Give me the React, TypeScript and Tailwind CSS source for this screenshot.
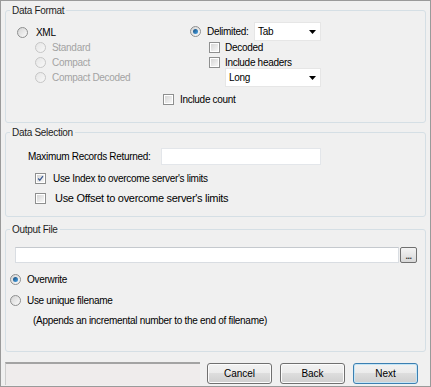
import React from 'react';

const Radio = ({ checked = false, disabled = false }: { checked?: boolean; disabled?: boolean }) => (
  <span
    className={`w-[11px] h-[11px] rounded-full border shrink-0 flex items-center justify-center ${
      disabled
        ? 'border-[#c6c6c6] bg-linear-to-br from-[#e6e6e6] to-[#f8f8f8]'
        : 'border-[#8e8f8f] bg-linear-to-br from-[#d4d4d4] to-[#fbfbfb]'
    }`}
  >
    {checked && <span className="w-[5px] h-[5px] rounded-full bg-linear-to-br from-[#164b7a] to-[#4aa6ea]" />}
  </span>
);

const Check = ({ checked = false }: { checked?: boolean }) => (
  <span className="w-[11px] h-[11px] border border-[#8e8f8f] bg-white p-[1px] shrink-0">
    <span className="relative block w-full h-full bg-linear-to-br from-[#d6d6d6] to-[#f7f7f7]">
      {checked && (
        <svg viewBox="0 0 9 9" className="absolute inset-0 w-full h-full">
          <path d="M1.5 4.5 L3.6 6.8 L7.6 1.4" fill="none" stroke="#3a5a93" strokeWidth="1.6" />
        </svg>
      )}
    </span>
  </span>
);

const Combo = ({ value, width }: { value: string; width: string }) => (
  <div className={`${width} h-[19px] bg-white border border-[#e6e6e6] flex items-center justify-between pl-[3px] pr-[4px]`}>
    <span>{value}</span>
    <svg width="7" height="4" viewBox="0 0 7 4">
      <path d="M0 0H7L3.5 4Z" fill="#000" />
    </svg>
  </div>
);

const Btn = ({ label, primary = false }: { label: string; primary?: boolean }) => (
  <button
    className={`w-[65px] h-[21px] rounded-[3px] border text-[10px] text-black bg-[linear-gradient(#f2f2f2_0%,#ebebeb_50%,#dddddd_50%,#cfcfcf_100%)] ${
      primary
        ? 'border-[#3c7fb1] shadow-[inset_0_0_0_1px_#c4e5f6]'
        : 'border-[#707070] shadow-[inset_0_0_0_1px_#fcfcfc]'
    }`}
  >
    {label}
  </button>
);

export default function App() {
  return (
    <div className="w-[431px] h-[387px] overflow-hidden bg-[#f0f0f0] border border-[#9a9a9a] px-[4px] flex flex-col font-['Liberation_Sans',Arial,sans-serif] text-[10px] tracking-[-0.3px] text-black">
      {/* Data Format */}
      <fieldset className="mt-[3px] h-[119px] border border-[#d5dfe5] rounded-[3px]">
        <legend className="ml-[4px] px-[2px] leading-[13px] text-[#1e1e1e]">Data Format</legend>
        <div className="flex">
          <div className="w-[184px] pl-[11px] pt-[8px] flex flex-col">
            <div className="h-[15px] flex items-center gap-[8px]">
              <Radio />
              <span>XML</span>
            </div>
            {['Standard', 'Compact', 'Compact Decoded'].map((t) => (
              <div key={t} className="h-[15px] ml-[18px] flex items-center gap-[6px] text-[#a3a3a3]">
                <Radio disabled />
                <span>{t}</span>
              </div>
            ))}
          </div>
          <div className="pt-[5px] flex flex-col">
            <div className="h-[19px] flex items-center">
              <Radio checked />
              <span className="ml-[6px] w-[47px]">Delimited:</span>
              <Combo value="Tab" width="w-[67px]" />
            </div>
            <div className="h-[14px] mt-[-1px] ml-[19px] flex items-center gap-[5px]">
              <Check />
              <span>Decoded</span>
            </div>
            <div className="h-[14px] mt-[1px] ml-[19px] flex items-center gap-[5px]">
              <Check />
              <span>Include headers</span>
            </div>
            <div className="mt-[-1px] ml-[35px]">
              <Combo value="Long" width="w-[96px]" />
            </div>
          </div>
        </div>
        <div className="h-[14px] mt-[5px] ml-[157px] flex items-center gap-[6px]">
          <Check />
          <span>Include count</span>
        </div>
      </fieldset>

      {/* Data Selection */}
      <fieldset className="mt-[3px] h-[91px] border border-[#d5dfe5] rounded-[3px]">
        <legend className="ml-[4px] px-[2px] leading-[13px] text-[#1e1e1e]">Data Selection</legend>
        <div className="mt-[9px] h-[17px] flex items-center">
          <span className="ml-[22px] w-[133px]">Maximum Records Returned:</span>
          <div className="w-[160px] h-[17px] bg-white border border-[#e3e6ea]" />
        </div>
        <div className="mt-[6px] h-[14px] ml-[29px] flex items-center gap-[7px]">
          <Check checked />
          <span>Use Index to overcome server's limits</span>
        </div>
        <div className="mt-[6px] h-[14px] ml-[29px] flex items-center gap-[9px] text-[11px]">
          <Check />
          <span>Use Offset to overcome server's limits</span>
        </div>
      </fieldset>

      {/* Output File */}
      <fieldset className="mt-[6px] h-[129px] border border-[#d5dfe5] rounded-[3px]">
        <legend className="ml-[4px] px-[2px] leading-[13px] text-[#1e1e1e]">Output File</legend>
        <div className="mt-[11px] ml-[9px] h-[16px] flex gap-[1px]">
          <div className="w-[384px] h-[16px] bg-white border border-[#d9dde2] border-t-[#c5c9ce]" />
          <div className="w-[17px] h-[16px] rounded-[2px] border border-[#707070] bg-[linear-gradient(#f4f4f4,#d8d8d8)] flex items-end justify-center pb-[3px]">
            <span className="text-[9px] font-bold leading-[5px] tracking-[-0.5px] text-[#333]">...</span>
          </div>
        </div>
        <div className="mt-[9px] ml-[4px] h-[14px] flex items-center gap-[6px]">
          <Radio checked />
          <span>Overwrite</span>
        </div>
        <div className="mt-[7px] ml-[4px] h-[14px] flex items-center gap-[6px]">
          <Radio />
          <span>Use unique filename</span>
        </div>
        <div className="mt-[6px] ml-[27px] h-[14px] flex items-center">
          (Appends an incremental number to the end of filename)
        </div>
      </fieldset>

      {/* Bottom bar */}
      <div className="mt-[10px] flex items-start">
        <div className="w-[195px] h-[23px] bg-[#efecec] border-t-2 border-t-[#a3a3a3] border-l border-l-[#cdcdcd]" />
        <div className="ml-[7px] mt-[1px] flex gap-[8px] tracking-normal">
          <Btn label="Cancel" />
          <Btn label="Back" />
          <Btn label="Next" primary />
        </div>
      </div>
    </div>
  );
}
